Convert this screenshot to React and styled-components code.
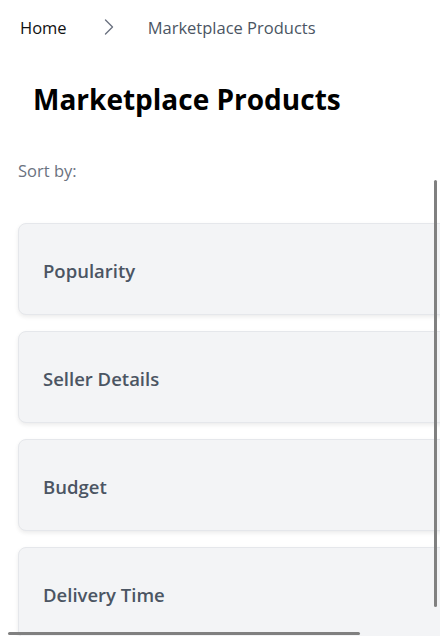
import React from "react";
import styled, { createGlobalStyle } from "styled-components";

const Global = createGlobalStyle`
  html, body { margin: 0; padding: 0; background: #fff; }
  body { font-family: "Open Sans", "Noto Sans", sans-serif; overflow: hidden; }
`;

const Page = styled.div`
  position: relative;
  width: 440px;
  height: 636px;
  overflow: hidden;
`;

const Breadcrumb = styled.nav`
  display: flex;
  align-items: center;
  height: 54px;
  padding-left: 20px;
  font-size: 16.5px;
`;

const Crumb = styled.span`
  color: ${(p) => (p.$current ? "#4b5563" : "#111")};
`;

const Sep = styled.span`
  display: flex;
  align-items: center;
  margin: 0 34px 0 37px;
`;

const Title = styled.h1`
  margin: 0;
  padding: 26px 0 0 33px;
  font-size: 28px;
  font-weight: 700;
  color: #000;
  line-height: 39px;
`;

const SortLabel = styled.div`
  padding: 40px 0 0 18px;
  font-size: 16.5px;
  color: #6b7280;
  line-height: 24px;
`;

const List = styled.div`
  display: flex;
  flex-direction: column;
  gap: 16px;
  padding: 40px 0 0 18px;
`;

const Card = styled.div`
  box-sizing: border-box;
  width: 540px;
  height: 92px;
  display: flex;
  align-items: center;
  padding: 3px 0 0 24px;
  background: #f3f4f6;
  border: 1px solid #e5e7eb;
  border-radius: 8px;
  box-shadow: 0 2px 4px rgba(0, 0, 0, 0.08);
  font-size: 18.5px;
  font-weight: 600;
  color: #4b5563;
`;

const VScroll = styled.div`
  position: absolute;
  left: 434px;
  top: 180px;
  width: 3px;
  height: 427px;
  background: #808080;
  border-radius: 2px;
`;

const HScroll = styled.div`
  position: absolute;
  left: 8px;
  top: 632px;
  width: 352px;
  height: 3px;
  background: #808080;
  border-radius: 2px;
`;

const items = ["Popularity", "Seller Details", "Budget", "Delivery Time"];

export default function App() {
  return (
    <Page>
      <Global />
      <Breadcrumb>
        <Crumb>Home</Crumb>
        <Sep>
          <svg width="10" height="16" viewBox="0 0 10 16" fill="none">
            <path d="M1.5 1l7 7-7 7" stroke="#6b7280" strokeWidth="1.4" strokeLinecap="round" strokeLinejoin="round" />
          </svg>
        </Sep>
        <Crumb $current>Marketplace Products</Crumb>
      </Breadcrumb>
      <Title>Marketplace Products</Title>
      <SortLabel>Sort by:</SortLabel>
      <List>
        {items.map((t) => (
          <Card key={t}>{t}</Card>
        ))}
      </List>
      <VScroll />
      <HScroll />
    </Page>
  );
}
